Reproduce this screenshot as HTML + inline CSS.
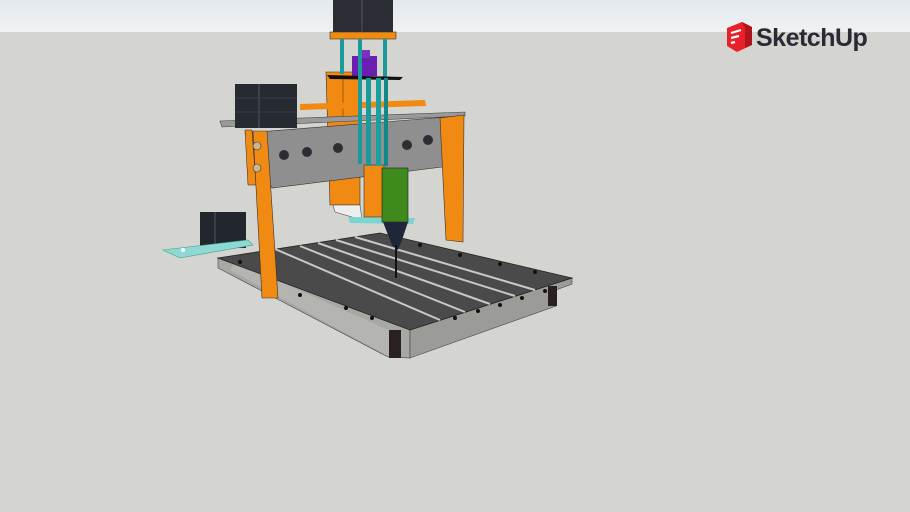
<!DOCTYPE html>
<html><head><style>
html,body{margin:0;padding:0;width:910px;height:512px;overflow:hidden;background:#d4d4d0}
.logo{position:absolute;left:756px;top:24px;font:bold 25px "Liberation Sans",sans-serif;color:#2a2a36;letter-spacing:-0.5px}
</style></head><body>
<svg width="910" height="512" style="position:absolute;left:0;top:0">
<defs><linearGradient id="sky" x1="0" y1="0" x2="0" y2="1"><stop offset="0" stop-color="#e3e9ee"/><stop offset="1" stop-color="#f0f2f2"/></linearGradient></defs>
<rect width="910" height="32" fill="url(#sky)"/>
<rect y="32" width="910" height="480" fill="#d4d4d0"/>
<!-- back orange panel -->
<polygon points="326,72 360,72 360,205 330,205" fill="#f18a12" stroke="#333" stroke-width="0.6"/>
<line x1="343" y1="75" x2="343" y2="120" stroke="#a85a00"/>
<!-- top motor -->
<rect x="333" y="0" width="60" height="32" fill="#2a2d33"/>
<line x1="362" y1="0" x2="362" y2="32" stroke="#555"/>
<rect x="330" y="32" width="66" height="7" fill="#f18a12" stroke="#333" stroke-width="0.6"/>
<!-- purple -->
<rect x="352" y="56" width="25" height="20" fill="#6a1fb0"/>
<rect x="358" y="50" width="12" height="8" fill="#7a30c0"/>
<!-- rods -->
<rect x="340" y="39" width="4" height="35" fill="#1a9a9a"/>
<rect x="383" y="39" width="4" height="40" fill="#1a9a9a"/>
<!-- black plate -->
<polygon points="327,75 403,77 400,80 330,79" fill="#111"/>
<!-- top shelf plate + rail -->
<polygon points="300,104 425,100 426,106 300,110" fill="#f18a12"/>
<polygon points="220,121 465,112 465,116 222,127" fill="#9a9a9a" stroke="#444" stroke-width="0.6"/>
<!-- left motor -->
<rect x="235" y="84" width="62" height="44" fill="#262a31"/>
<line x1="259" y1="84" x2="259" y2="128" stroke="#555"/>
<line x1="235" y1="98" x2="297" y2="98" stroke="#3a3e46"/>
<line x1="235" y1="112" x2="297" y2="112" stroke="#3a3e46"/>
<!-- base bed -->
<polygon points="218,258 218,268 388,357 410,358 410,330" fill="#a7a7a4" stroke="#444" stroke-width="0.6"/>
<polygon points="230,270 388,356 400,358 400,335 235,262" fill="#b4b4b0"/>
<polygon points="410,330 572,278 572,284 556,290 556,306 410,358" fill="#9b9b98" stroke="#444" stroke-width="0.6"/>
<rect x="389" y="330" width="12" height="28" fill="#2a2020"/>
<rect x="548" y="286" width="9" height="20" fill="#2a2020"/>
<polygon points="218,258 380,233 572,278 410,330" fill="#4a4a4a" stroke="#222" stroke-width="0.8"/>
<g stroke="#c8c8c8" stroke-width="2">
<line x1="275" y1="249" x2="440" y2="320"/>
<line x1="300" y1="246" x2="465" y2="312"/>
<line x1="318" y1="243" x2="490" y2="304"/>
<line x1="336" y1="240" x2="515" y2="296"/>
<line x1="355" y1="237" x2="535" y2="290"/>
</g>
<g fill="#111">
<circle cx="240" cy="262" r="2"/><circle cx="300" cy="295" r="2"/><circle cx="346" cy="308" r="2"/><circle cx="372" cy="318" r="2"/>
<circle cx="420" cy="245" r="2"/><circle cx="460" cy="255" r="2"/><circle cx="500" cy="264" r="2"/><circle cx="535" cy="272" r="2"/>
<circle cx="455" cy="318" r="2"/><circle cx="478" cy="311" r="2"/><circle cx="500" cy="305" r="2"/><circle cx="522" cy="298" r="2"/><circle cx="545" cy="291" r="2"/>
</g>
<!-- gantry beam -->
<polygon points="245,133 460,116 458,165 272,188" fill="#8f8f8f" stroke="#333" stroke-width="0.6"/>
<g fill="#2b2e33">
<circle cx="284" cy="155" r="5"/><circle cx="307" cy="152" r="5"/><circle cx="338" cy="148" r="5"/><circle cx="407" cy="145" r="5"/><circle cx="428" cy="140" r="5"/><circle cx="450" cy="138" r="5"/>
</g>
<!-- left leg -->
<polygon points="245,130 252,130 256,185 248,185" fill="#f18a12" stroke="#222" stroke-width="0.5"/>
<polygon points="253,131 267,131 278,298 262,298" fill="#f18a12" stroke="#333" stroke-width="0.6"/>
<circle cx="257" cy="146" r="4" fill="#cdb68a" stroke="#333" stroke-width="0.6"/>
<circle cx="257" cy="168" r="4" fill="#cdb68a" stroke="#333" stroke-width="0.6"/>
<!-- right leg -->
<polygon points="440,118 464,115 463,242 446,240" fill="#f18a12" stroke="#333" stroke-width="0.6"/>
<!-- z carriage -->
<polygon points="333,205 360,205 362,220 335,212" fill="#eeeeee" stroke="#333" stroke-width="0.5"/>
<polygon points="348,217 415,218 413,224 350,223" fill="#7ad4d0"/>
<rect x="364" y="165" width="20" height="52" fill="#f18a12" stroke="#333" stroke-width="0.6"/>
<rect x="358" y="39" width="4" height="125" fill="#1a9a9a"/>
<rect x="366" y="78" width="5" height="88" fill="#1a9a9a"/>
<rect x="376" y="78" width="5" height="88" fill="#1aa0a0"/>
<rect x="384" y="78" width="4" height="88" fill="#138888"/>
<!-- spindle -->
<rect x="382" y="168" width="26" height="54" fill="#3f8a1c" stroke="#222" stroke-width="0.6"/>
<polygon points="383,222 408,222 402,240 398,250 392,245" fill="#1e2638"/>
<line x1="396" y1="245" x2="396" y2="278" stroke="#111" stroke-width="2"/>
<!-- lower left motor + plate -->
<rect x="200" y="212" width="46" height="36" fill="#22262d"/>
<line x1="215" y1="212" x2="215" y2="248" stroke="#555"/>
<polygon points="163,250 248,240 253,245 180,258" fill="#8fd8d4" stroke="#3a8" stroke-width="0.6"/>
<circle cx="183" cy="250" r="2" fill="#fff"/>
<!-- logo cube -->
<polygon points="727,28 742,22 752,27 752,45 737,52 727,46" fill="#e8202a"/>
<polygon points="742,22 752,27 752,45 745,48 745,28" fill="#b0141c"/>
<path d="M731 33 L741 30 M731 38 L739 36 M731 43 L735 42" stroke="#fff" stroke-width="2.2"/>
</svg>
<div class="logo">SketchUp</div>
</body></html>
